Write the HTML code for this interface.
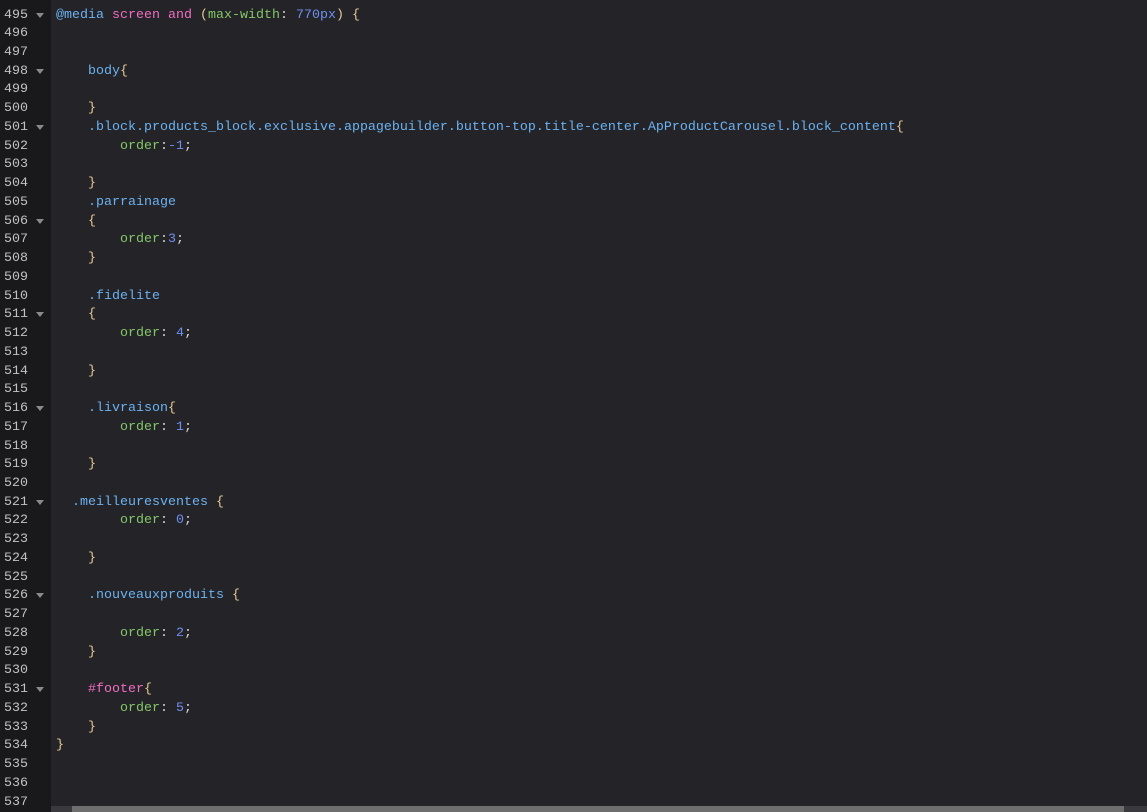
<!DOCTYPE html>
<html><head><meta charset="utf-8"><style>
html,body{margin:0;padding:0;width:1147px;height:812px;overflow:hidden;background:#232328;}
.g{position:absolute;left:0;top:0;width:51px;height:812px;background:#19191b;}
.l{position:absolute;left:0;height:19px;font:13.33px/19px "Liberation Mono",monospace;white-space:pre;}
.n{position:absolute;left:4px;color:#c2c2c2;}
.a{position:absolute;left:36px;top:7px;width:0;height:0;border-left:4px solid transparent;border-right:4px solid transparent;border-top:5px solid #8a8a8a;}
.c{position:absolute;left:56px;color:#e8c995;}
.s{color:#6cb2f0}.k{color:#f06ec2}.p{color:#e8c995}.gr{color:#84c667}.nu{color:#7090f0}.w{color:#d8d8d8}
.tr{position:absolute;left:51px;top:806px;width:1096px;height:6px;background:#3a3a3e;}
.th{position:absolute;left:72px;top:806px;width:1052px;height:6px;background:#6e6e6e;}
</style></head><body>
<div class="g"></div>
<div id="c"></div>
<div class="tr"></div><div class="th"></div>
<script>
var L=[
[1,'<span class="s">@media</span> <span class="k">screen</span> <span class="k">and</span> <span class="p">(</span><span class="gr">max-width</span><span class="w">:</span> <span class="nu">770px</span><span class="p">)</span> <span class="p">{</span>'],
[0,''],[0,''],
[1,'    <span class="s">body</span><span class="p">{</span>'],
[0,''],
[0,'    <span class="p">}</span>'],
[1,'    <span class="s">.block.products_block.exclusive.appagebuilder.button-top.title-center.ApProductCarousel.block_content</span><span class="p">{</span>'],
[0,'        <span class="gr">order</span><span class="w">:</span><span class="nu">-1</span><span class="w">;</span>'],
[0,''],
[0,'    <span class="p">}</span>'],
[0,'    <span class="s">.parrainage</span>'],
[1,'    <span class="p">{</span>'],
[0,'        <span class="gr">order</span><span class="w">:</span><span class="nu">3</span><span class="w">;</span>'],
[0,'    <span class="p">}</span>'],
[0,''],
[0,'    <span class="s">.fidelite</span>'],
[1,'    <span class="p">{</span>'],
[0,'        <span class="gr">order</span><span class="w">:</span> <span class="nu">4</span><span class="w">;</span>'],
[0,''],
[0,'    <span class="p">}</span>'],
[0,''],
[1,'    <span class="s">.livraison</span><span class="p">{</span>'],
[0,'        <span class="gr">order</span><span class="w">:</span> <span class="nu">1</span><span class="w">;</span>'],
[0,''],
[0,'    <span class="p">}</span>'],
[0,''],
[1,'  <span class="s">.meilleuresventes</span> <span class="p">{</span>'],
[0,'        <span class="gr">order</span><span class="w">:</span> <span class="nu">0</span><span class="w">;</span>'],
[0,''],
[0,'    <span class="p">}</span>'],
[0,''],
[1,'    <span class="s">.nouveauxproduits</span> <span class="p">{</span>'],
[0,''],
[0,'        <span class="gr">order</span><span class="w">:</span> <span class="nu">2</span><span class="w">;</span>'],
[0,'    <span class="p">}</span>'],
[0,''],
[1,'    <span class="k">#footer</span><span class="p">{</span>'],
[0,'        <span class="gr">order</span><span class="w">:</span> <span class="nu">5</span><span class="w">;</span>'],
[0,'    <span class="p">}</span>'],
[0,'<span class="p">}</span>'],
[0,''],[0,''],[0,'']];
var h='';
for(var i=0;i<L.length;i++){var t=5.5+i*18.74;
h+='<div class="l" style="top:'+t+'px;width:1147px"><span class="n">'+(495+i)+'</span>'+(L[i][0]?'<span class="a"></span>':'')+'<span class="c">'+L[i][1]+'</span></div>';}
document.getElementById('c').innerHTML=h;
</script>
</body></html>
